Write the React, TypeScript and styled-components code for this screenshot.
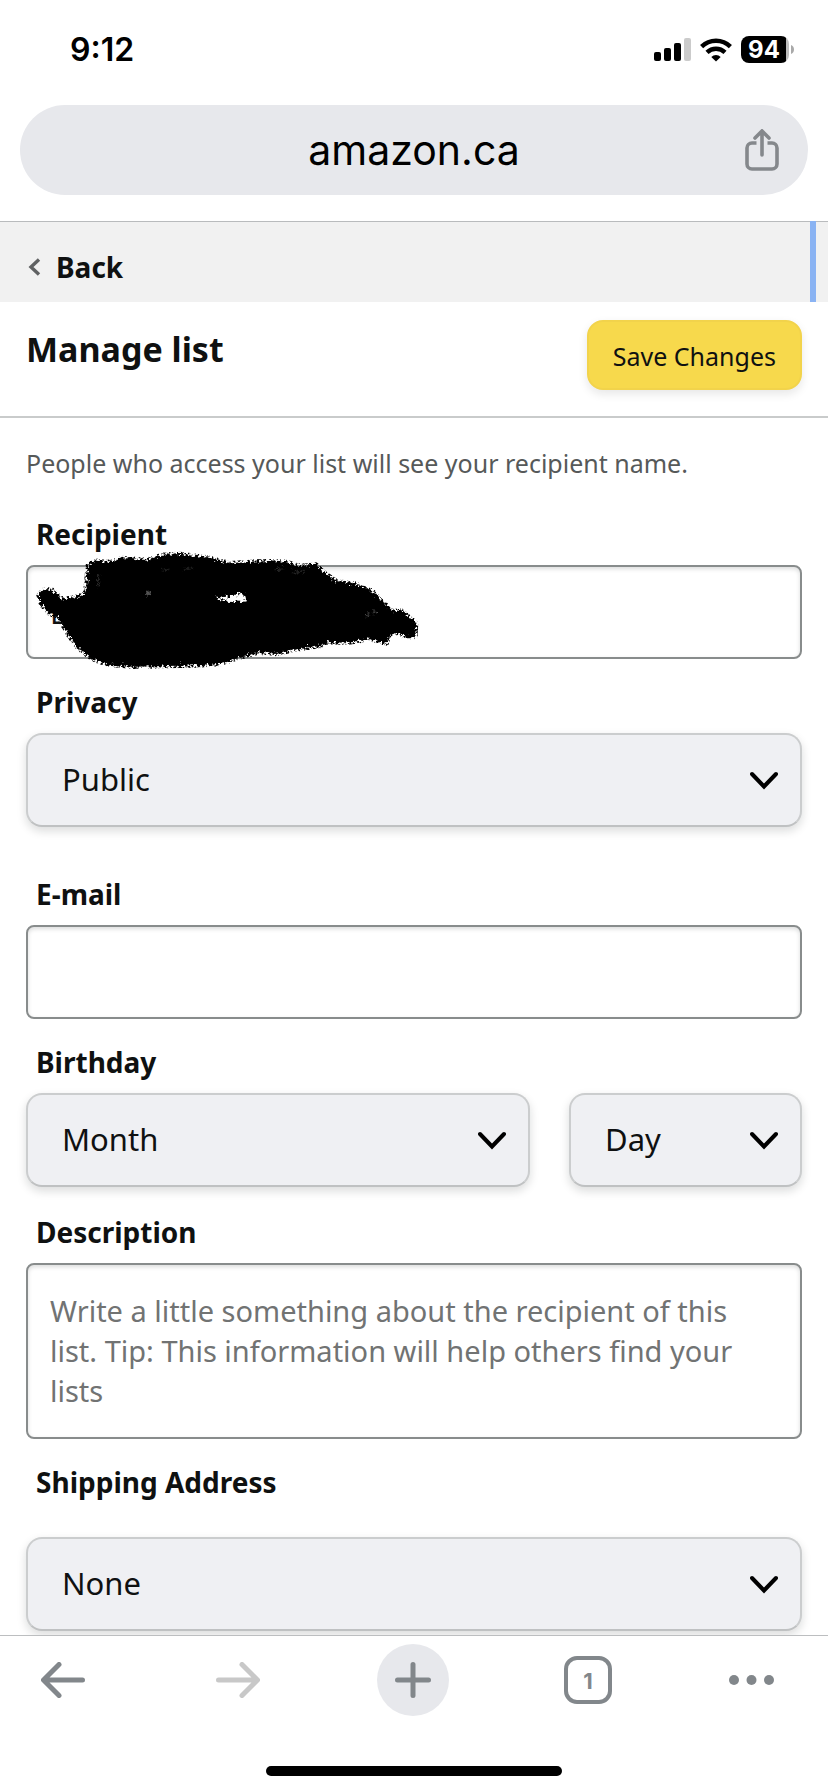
import React from "react";
import styled, { createGlobalStyle } from "styled-components";

const GlobalStyle = createGlobalStyle`
  * { box-sizing: border-box; }
  body { margin: 0; background: #fff; }
`;

const siteFont = '"Noto Sans", "Open Sans", sans-serif';
const systemFont = 'Inter, "Liberation Sans", sans-serif';

const Page = styled.div`
  min-height: 100vh;
  display: flex;
  flex-direction: column;
  background: #fff;
  color: #0f1111;
  font-family: ${siteFont};
`;

const StatusBar = styled.header`
  height: 105px;
  padding: 0 34px 6px 70px;
  display: flex;
  align-items: center;
  justify-content: space-between;
  color: #000;
  font-family: ${systemFont};
`;

const Clock = styled.time`
  font-size: 32px;
  font-weight: 600;
  line-height: 40px;
`;

const StatusIcons = styled.div`
  display: flex;
  align-items: center;
  gap: 9px;
`;

const Battery = styled.div`
  display: flex;
  align-items: center;
  gap: 2px;
`;

const BatteryBody = styled.div`
  width: 48px;
  height: 27px;
  padding-right: 2px;
  border-radius: 8px;
  background: linear-gradient(to right, #000 45px, #bdbdbd 45px);
  color: #fff;
  font-size: 24px;
  font-weight: 700;
  line-height: 27px;
  text-align: center;
`;

const AddressRow = styled.div`
  padding: 0 20px 26px;
`;

const AddressBar = styled.div`
  height: 90px;
  padding: 0 26px;
  border-radius: 45px;
  background: #e7e8ec;
  display: grid;
  grid-template-columns: 40px 1fr 40px;
  align-items: center;
`;

const Address = styled.input`
  grid-column: 2;
  min-width: 0;
  border: 0;
  padding: 0;
  background: transparent;
  color: #000;
  font: 400 41px/50px ${systemFont};
  text-align: center;
  outline: none;
`;

const IconButton = styled.button<{ $width?: number; $filled?: boolean }>`
  width: ${(p) => p.$width ?? 72}px;
  height: 72px;
  padding: 0;
  border: 0;
  border-radius: 36px;
  background: ${(p) => (p.$filled ? "#e7e8ec" : "transparent")};
  display: flex;
  align-items: center;
  justify-content: center;
`;

const BackBar = styled.nav`
  height: 81px;
  padding: 0 12px 0 28px;
  border-top: 1px solid #b9bbbd;
  background: #f1f1f1;
  display: flex;
  align-items: stretch;
  justify-content: space-between;
`;

const BackLink = styled.a`
  display: flex;
  align-items: center;
  gap: 15px;
  padding-top: 10px;
  color: inherit;
  font-size: 28px;
  font-weight: 700;
  line-height: 40px;
  text-decoration: none;
`;

const LoadingBar = styled.div`
  width: 6px;
  margin-top: -1px;
  background: #8ab3f3;
`;

const TitleBar = styled.div`
  padding: 18px 26px 26px;
  border-bottom: 2px solid #c9cbcb;
  display: flex;
  align-items: flex-start;
  justify-content: space-between;
`;

const Title = styled.h1`
  margin: 6px 0 0;
  font-size: 34px;
  font-weight: 700;
  line-height: 46px;
`;

const SaveButton = styled.button`
  height: 70px;
  padding: 2px 24px 0;
  border: 2px solid #f2d34b;
  border-radius: 16px;
  background: #f7d94c;
  box-shadow: 0 4px 10px rgba(15, 17, 17, 0.1);
  color: #0f1111;
  font: 400 25px/36px ${siteFont};
`;

const Form = styled.form`
  flex: 1;
  padding: 25px 26px 4px;
`;

const Hint = styled.p`
  margin: 0 0 31px;
  color: #565959;
  font-size: 25px;
  line-height: 40px;
`;

const Field = styled.div<{ $after?: number; $labelGap?: number }>`
  display: flex;
  flex-direction: column;
  gap: ${(p) => p.$labelGap ?? 11}px;
  margin-bottom: ${(p) => p.$after ?? 23}px;
`;

const Label = styled.label`
  padding-left: 10px;
  font-size: 28px;
  font-weight: 700;
  line-height: 40px;
`;

const TextInput = styled.input`
  width: 100%;
  height: 94px;
  padding: 0 22px;
  border: 2px solid #888c8c;
  border-radius: 8px;
  background: #fff;
  box-shadow: inset 0 2px 4px rgba(15, 17, 17, 0.15);
  color: #0f1111;
  font: 400 30px/40px ${siteFont};
`;

const TextArea = styled.textarea`
  display: block;
  width: 100%;
  height: 176px;
  padding: 26px 30px 22px 22px;
  border: 2px solid #888c8c;
  border-radius: 8px;
  background: #fff;
  box-shadow: inset 0 2px 4px rgba(15, 17, 17, 0.15);
  color: #0f1111;
  font: 400 29px/40px ${siteFont};
  resize: none;
  overflow: hidden;

  &::placeholder {
    color: #717373;
    opacity: 1;
  }
`;

const SelectBox = styled.div`
  display: grid;
  align-items: center;

  > * {
    grid-area: 1 / 1;
  }

  > svg {
    justify-self: end;
    margin-right: 24px;
    pointer-events: none;
  }
`;

const NativeSelect = styled.select`
  appearance: none;
  width: 100%;
  height: 94px;
  padding: 0 60px 2px 34px;
  border: 2px solid #cbcdce;
  border-bottom-color: #bfc1c2;
  border-radius: 16px;
  background: #eff0f3;
  box-shadow: 0 4px 10px rgba(15, 17, 17, 0.15);
  color: #0f1111;
  font: 400 31px/44px ${siteFont};
`;

const DateRow = styled.div`
  display: grid;
  grid-template-columns: 504fr 233fr;
  gap: 39px;
`;

const Redacted = styled.div`
  position: relative;
`;

const ScribbleSvg = styled.svg`
  position: absolute;
  left: 6px;
  top: -15px;
  pointer-events: none;
`;

const BottomBar = styled.footer`
  position: sticky;
  bottom: 0;
  border-top: 1px solid #bcbec0;
  background: #fff;
  display: flex;
  flex-direction: column;
  align-items: center;
  padding-bottom: 16px;
  gap: 50px;
`;

const Toolbar = styled.div`
  width: 100%;
  padding: 8px 53px 0 27px;
  display: flex;
  justify-content: space-between;
`;

const TabCount = styled.span`
  width: 48px;
  height: 48px;
  border: 4px solid #82878b;
  border-radius: 13px;
  color: #82878b;
  font: 700 22px/42px ${systemFont};
  text-align: center;
`;

const HomeIndicator = styled.div`
  width: 296px;
  height: 10px;
  border-radius: 5px;
  background: #000;
`;

const SignalIcon = () => (
  <svg width="37" height="24" viewBox="0 0 37 24" aria-hidden="true">
    <rect x="0" y="14" width="7" height="9" rx="2" />
    <rect x="10" y="10" width="7" height="13" rx="2" />
    <rect x="20" y="5" width="7" height="18" rx="2" />
    <rect x="30" y="0" width="7" height="23" rx="2" fill="#cbcbcb" />
  </svg>
);

const WifiIcon = () => (
  <svg width="32" height="24" viewBox="0 0 32 24" aria-hidden="true">
    <g fill="none" stroke="#000" strokeWidth="4.4">
      <path d="M1.6 8.6a20.5 20.5 0 0 1 28.8 0" />
      <path d="M7 14.3a13 13 0 0 1 18 0" />
    </g>
    <path d="M16 23.6l-4.7-4.7a6.8 6.8 0 0 1 9.4 0z" />
  </svg>
);

const ShareIcon = () => (
  <svg width="34" height="42" viewBox="0 0 34 42" fill="none" stroke="#85888c" strokeWidth="3.6" aria-hidden="true">
    <path d="M11.5 14H7a5 5 0 0 0-5 5v16a5 5 0 0 0 5 5h20a5 5 0 0 0 5-5V19a5 5 0 0 0-5-5h-4.5" />
    <path d="M17 26V3M10 9l7-7 7 7" strokeLinecap="round" />
  </svg>
);

const Chevron = () => (
  <svg width="28" height="20" viewBox="0 0 28 20" fill="none" aria-hidden="true">
    <path d="M2 4l12 12.5L26 4" stroke="#000" strokeWidth="4" strokeLinecap="round" />
  </svg>
);

const BackChevron = () => (
  <svg width="13" height="18" viewBox="0 0 13 18" fill="none" aria-hidden="true">
    <path d="M11 1.5L3 9l8 7.5" stroke="#606263" strokeWidth="3.4" />
  </svg>
);

const Arrow = ({ color, flip }: { color: string; flip?: boolean }) => (
  <svg width="44" height="36" viewBox="0 0 44 36" fill="none" aria-hidden="true">
    <path
      d={flip ? "M2.5 18H41M26 2.5L41.5 18 26 33.5" : "M41.5 18H3M18 2.5L2.5 18 18 33.5"}
      stroke={color}
      strokeWidth="5"
      strokeLinecap="round"
      strokeLinejoin="round"
    />
  </svg>
);

const PlusIcon = () => (
  <svg width="36" height="36" viewBox="0 0 36 36" aria-hidden="true">
    <path d="M18 2.5v31M2.5 18h31" stroke="#82878b" strokeWidth="5" strokeLinecap="round" />
  </svg>
);

const MoreIcon = () => (
  <svg width="45" height="10" viewBox="0 0 45 10" fill="#82878b" aria-hidden="true">
    <circle cx="5" cy="5" r="5" />
    <circle cx="22.5" cy="5" r="5" />
    <circle cx="40" cy="5" r="5" />
  </svg>
);

const blot =
  "M116 285 L130 270 L155 268 L172 284 L188 298 L225 292 L256 280 L264 195 L290 182 L330 186 L370 174 L440 180 L490 164 L540 162 L620 172 L690 190 L780 184 L850 184 L900 198 L948 194 L975 220 L1010 244 L1070 252 L1120 276 L1150 306 L1175 334 L1205 332 L1248 368 L1246 410 L1225 412 L1190 398 L1168 404 L1160 430 L1110 418 L1040 428 L985 426 L960 438 L880 450 L830 462 L780 456 L720 472 L660 492 L590 496 L500 498 L400 500 L330 494 L280 480 L235 445 L205 405 L176 352 L146 340 L124 314 Z";

/* Charcoal-like brush mark that hides the recipient name. */
const Scribble = () => (
  <ScribbleSvg width="392" height="124" viewBox="96 150 1176 372" aria-hidden="true">
    <defs>
      <filter id="rough" x="-5%" y="-10%" width="110%" height="120%">
        <feTurbulence type="fractalNoise" baseFrequency="0.11" numOctaves="3" seed="4" result="n" />
        <feDisplacementMap in="SourceGraphic" in2="n" scale="26" xChannelSelector="R" yChannelSelector="G" />
        <feGaussianBlur stdDeviation="1.5" />
      </filter>
      <filter id="grain" x="-5%" y="-10%" width="110%" height="120%">
        <feTurbulence type="fractalNoise" baseFrequency="0.14" numOctaves="2" seed="9" />
        <feColorMatrix values="0 0 0 0 0  0 0 0 0 0  0 0 0 0 0  5 0 0 0 -2.4" result="g" />
        <feComposite in="SourceGraphic" in2="g" operator="in" />
      </filter>
    </defs>
    <path d={blot} fill="none" stroke="#000" strokeWidth="14" strokeLinejoin="round" filter="url(#grain)" />
    <path d={blot} filter="url(#rough)" />
    <g filter="url(#rough)" fill="#fff">
      <path d="M648 296L664 292L690 288L706 287L718 281L736 284L738 304L722 306L700 304L668 301Z" />
    </g>
    <g fill="#555" filter="url(#rough)">
      <path d="M438 282l6-10 6 2-4 10-6 4z" />
      <path d="M484 212l22-5 4 3-20 5zM546 208l24-4 12 3-28 3z" opacity=".5" />
      <path d="M292 222l4 2 1 32-5 4z" opacity=".6" />
      <path d="M1096 348l8-12 4 4-8 12zM1116 338l8-10 4 5-8 10z" />
      <path d="M824 206l30-3 4 3-30 4zM876 212l36 2-4 4-30-2z" opacity=".6" />
    </g>
  </ScribbleSvg>
);

type SelectProps = { id: string; options: string[]; label?: string };

const Select = ({ id, options, label }: SelectProps) => (
  <SelectBox>
    <NativeSelect id={id} aria-label={label}>
      {options.map((o) => (
        <option key={o}>{o}</option>
      ))}
    </NativeSelect>
    <Chevron />
  </SelectBox>
);

export default function App() {
  return (
    <Page>
      <GlobalStyle />
      <StatusBar>
        <Clock>9:12</Clock>
        <StatusIcons>
          <SignalIcon />
          <WifiIcon />
          <Battery>
            <BatteryBody>94</BatteryBody>
            <svg width="3" height="9" viewBox="0 0 3 9" aria-hidden="true">
              <path d="M0 0c4 1 4 8 0 9z" fill="#a9a9a9" />
            </svg>
          </Battery>
        </StatusIcons>
      </StatusBar>
      <AddressRow>
        <AddressBar>
          <Address type="text" aria-label="Address" defaultValue="amazon.ca" />
          <IconButton type="button" $width={40} aria-label="Share">
            <ShareIcon />
          </IconButton>
        </AddressBar>
      </AddressRow>
      <BackBar>
        <BackLink href="#back">
          <BackChevron />
          Back
        </BackLink>
        <LoadingBar />
      </BackBar>
      <TitleBar>
        <Title>Manage list</Title>
        <SaveButton type="submit" form="manage-list">
          Save Changes
        </SaveButton>
      </TitleBar>
      <Form id="manage-list" onSubmit={(e) => e.preventDefault()}>
        <Hint>People who access your list will see your recipient name.</Hint>
        <Field>
          <Label htmlFor="recipient">Recipient</Label>
          <Redacted>
            <TextInput id="recipient" type="text" defaultValue="L" />
            <Scribble />
          </Redacted>
        </Field>
        <Field $after={47}>
          <Label htmlFor="privacy">Privacy</Label>
          <Select id="privacy" options={["Public"]} />
        </Field>
        <Field>
          <Label htmlFor="email">E-mail</Label>
          <TextInput id="email" type="email" />
        </Field>
        <Field $after={25}>
          <Label htmlFor="month">Birthday</Label>
          <DateRow>
            <Select id="month" options={["Month"]} />
            <Select id="day" options={["Day"]} label="Day" />
          </DateRow>
        </Field>
        <Field>
          <Label htmlFor="description">Description</Label>
          <TextArea
            id="description"
            placeholder="Write a little something about the recipient of this list. Tip: This information will help others find your lists"
          />
        </Field>
        <Field $after={0} $labelGap={35}>
          <Label htmlFor="address">Shipping Address</Label>
          <Select id="address" options={["None"]} />
        </Field>
      </Form>
      <BottomBar>
        <Toolbar>
          <IconButton type="button" aria-label="Go back">
            <Arrow color="#82878b" />
          </IconButton>
          <IconButton type="button" aria-label="Go forward" disabled>
            <Arrow color="#c8c8c8" flip />
          </IconButton>
          <IconButton type="button" aria-label="New tab" $filled>
            <PlusIcon />
          </IconButton>
          <IconButton type="button" aria-label="Tabs">
            <TabCount>1</TabCount>
          </IconButton>
          <IconButton type="button" aria-label="More" $width={48}>
            <MoreIcon />
          </IconButton>
        </Toolbar>
        <HomeIndicator />
      </BottomBar>
    </Page>
  );
}
